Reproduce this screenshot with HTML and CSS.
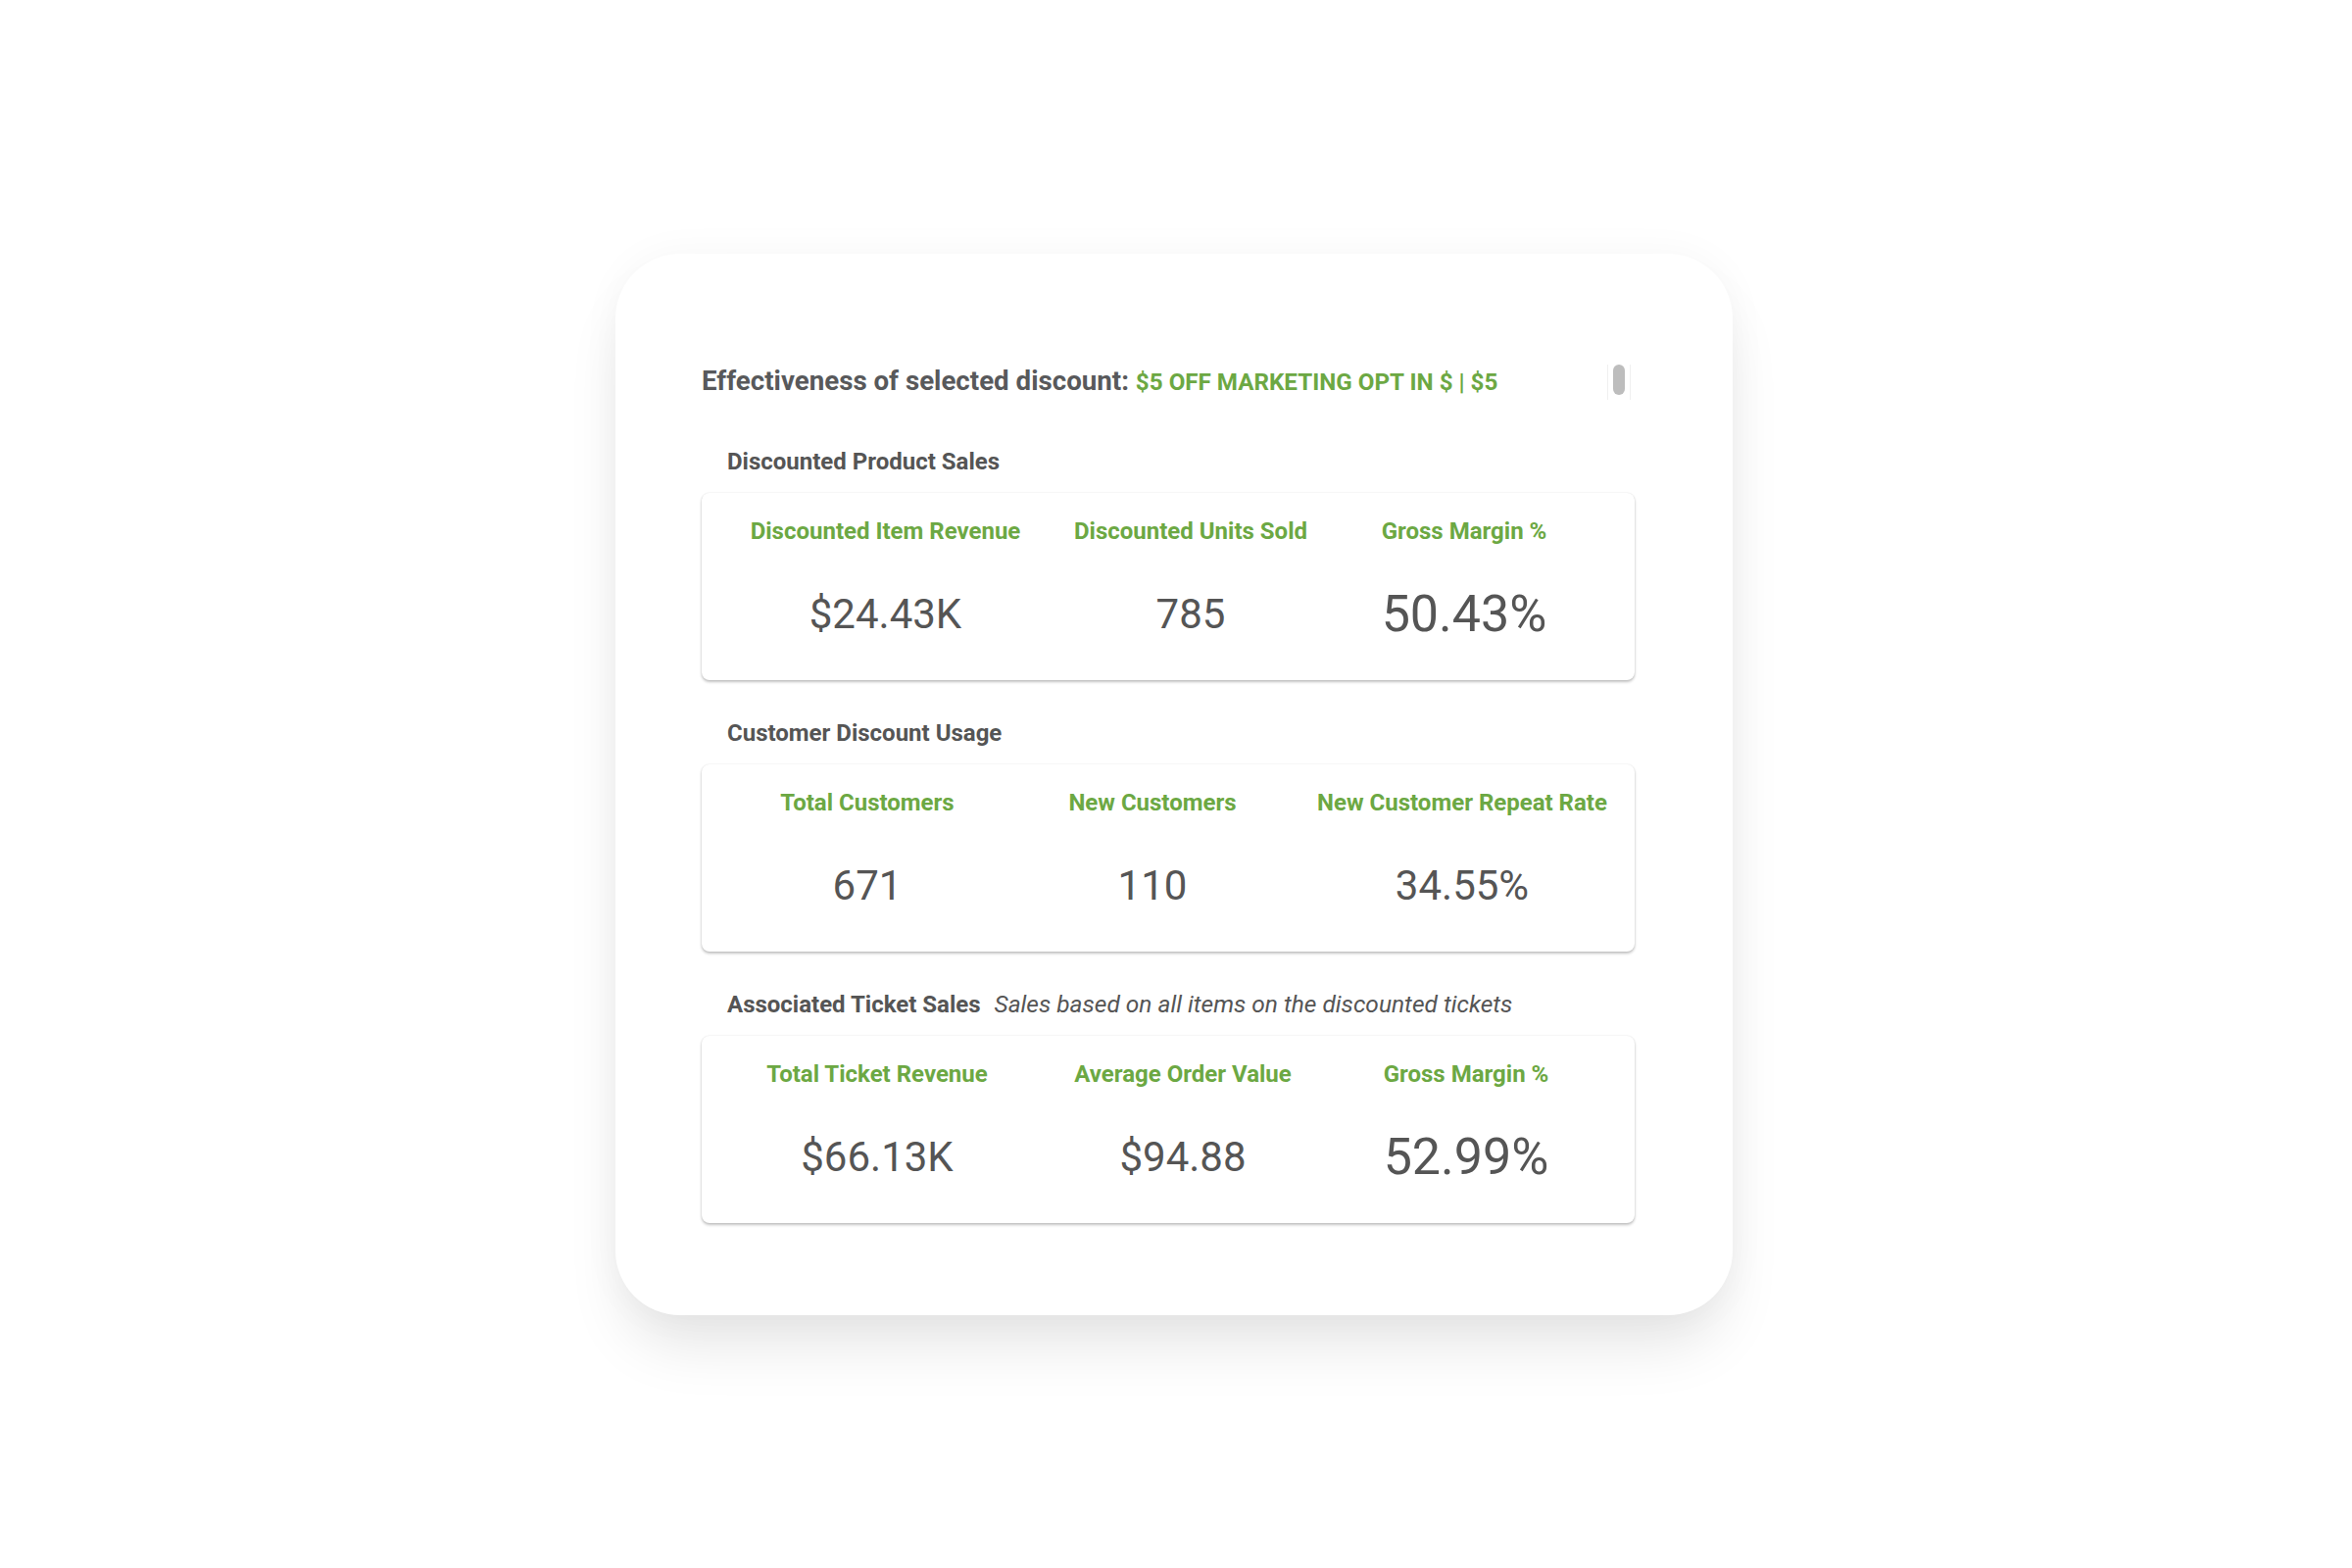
FILE: index.html
```html
<!DOCTYPE html>
<html lang="en">
<head>
  <meta charset="UTF-8">
  <meta name="viewport" content="width=device-width, initial-scale=1.0">
  <title>Discount Effectiveness</title>
  <link rel="stylesheet" href="styles.css">
</head>
<body>
  <div class="card">
    <div class="title-row">
      <h1 class="title">Effectiveness of selected discount: <span class="discount-name">$5 OFF MARKETING OPT IN $ | $5</span></h1>
      <div class="scrollbar"><div class="thumb"></div></div>
    </div>

    <!-- Discounted Product Sales -->
    <div class="section">
      <h2 class="section-title">Discounted Product Sales</h2>
      <div class="panel panel-product">
        <div class="metric">
          <div class="metric-label">Discounted Item Revenue</div>
          <div class="metric-value">$24.43K</div>
        </div>
        <div class="metric">
          <div class="metric-label">Discounted Units Sold</div>
          <div class="metric-value">785</div>
        </div>
        <div class="metric">
          <div class="metric-label">Gross Margin %</div>
          <div class="metric-value big">50.43%</div>
        </div>
      </div>
    </div>

    <!-- Customer Discount Usage -->
    <div class="section">
      <h2 class="section-title">Customer Discount Usage</h2>
      <div class="panel panel-customers">
        <div class="metric">
          <div class="metric-label">Total Customers</div>
          <div class="metric-value">671</div>
        </div>
        <div class="metric">
          <div class="metric-label">New Customers</div>
          <div class="metric-value">110</div>
        </div>
        <div class="metric">
          <div class="metric-label">New Customer Repeat Rate</div>
          <div class="metric-value">34.55%</div>
        </div>
      </div>
    </div>

    <!-- Associated Ticket Sales -->
    <div class="section">
      <h2 class="section-title">Associated Ticket Sales <span class="note">Sales based on all items on the discounted tickets</span></h2>
      <div class="panel panel-tickets">
        <div class="metric">
          <div class="metric-label">Total Ticket Revenue</div>
          <div class="metric-value">$66.13K</div>
        </div>
        <div class="metric">
          <div class="metric-label">Average Order Value</div>
          <div class="metric-value">$94.88</div>
        </div>
        <div class="metric">
          <div class="metric-label">Gross Margin %</div>
          <div class="metric-value big">52.99%</div>
        </div>
      </div>
    </div>
  </div>
</body>
</html>
```

FILE: styles.css
```css
body {
  font-family: Roboto, "Liberation Sans", Arial, sans-serif;
  margin: 0;
  padding: 0;
  background-color: #fff;
  color: #555;
  min-height: 100vh;
  display: flex;
  align-items: center;
  justify-content: center;
}
.card {
  width: 1140px;
  box-sizing: border-box;
  margin-right: 4px;
  padding: 112px 100px 94px 88px;
  background-color: #fff;
  border-radius: 66px;
  box-shadow: 0 40px 60px -10px rgba(0, 0, 0, 0.1), 0 0 40px rgba(0, 0, 0, 0.04);
}
.title-row {
  display: flex;
  justify-content: space-between;
  align-items: center;
  height: 38px;
  margin-bottom: 46px;
}
.title {
  margin: 0;
  font-size: 27.7px;
  line-height: 38px;
  font-weight: bold;
  color: #58595b;
}
.discount-name {
  font-size: 24.2px;
  color: #6ca843;
}
.scrollbar {
  width: 24px;
  height: 36px;
  margin-right: 4px;
  box-sizing: border-box;
  border-left: 1px solid #f0f0f0;
  border-right: 1px solid #f0f0f0;
  display: flex;
  justify-content: center;
  align-items: flex-start;
}
.thumb {
  width: 12px;
  height: 31px;
  border-radius: 6px;
  background-color: #bdbdbd;
}
.section {
  margin-top: 38px;
}
.title-row + .section {
  margin-top: 0;
}
.section-title {
  margin: 0 0 16px;
  padding-left: 26px;
  font-size: 24px;
  line-height: 32px;
  font-weight: bold;
  color: #555;
}
.note {
  margin-left: 8px;
  font-size: 24.5px;
  font-weight: normal;
  font-style: italic;
}
.panel {
  display: grid;
  height: 191px;
  box-sizing: border-box;
  padding-top: 23px;
  background-color: #fff;
  border-radius: 8px;
  box-shadow: 0 2px 3px rgba(0, 0, 0, 0.24), 0 0 2px rgba(0, 0, 0, 0.1);
}
.panel-product {
  grid-template-columns: 375px 248px 310px;
}
.panel-customers {
  padding-left: 21px;
  grid-template-columns: 296px 286px 346px;
}
.panel-tickets {
  padding-left: 2px;
  grid-template-columns: 354px 270px 308px;
}
.metric {
  text-align: center;
}
.metric-label {
  font-size: 24px;
  line-height: 32px;
  font-weight: bold;
  color: #6ca843;
  margin-bottom: 44px;
}
.metric-value {
  font-size: 42px;
  line-height: 50px;
  color: #555;
}
.metric-value.big {
  font-size: 52px;
}
```
